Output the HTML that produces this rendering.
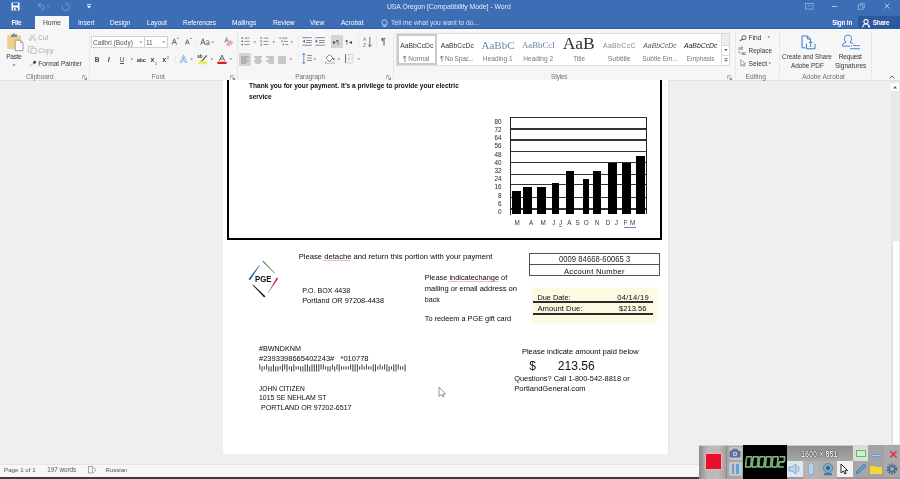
<!DOCTYPE html>
<html><head><meta charset="utf-8">
<style>
*{margin:0;padding:0;box-sizing:border-box}
html,body{width:900px;height:479px;overflow:hidden;background:#efefef;font-family:"Liberation Sans",sans-serif;position:relative}
.a{position:absolute;display:block}
.t{position:absolute;white-space:pre;line-height:10px;height:10px}
.d{}
</style></head><body><div id="root" style="position:absolute;left:0;top:0;width:900px;height:479px;overflow:hidden;filter:blur(0.3px)">

<div class="a" style="left:0px;top:0px;width:900px;height:29px;background:#3c6db5;"></div>
<div class="a" style="left:0px;top:29px;width:900px;height:51px;background:#f6f6f6;"></div>
<div class="a" style="left:0px;top:28px;width:900px;height:1px;background:#2d5c9f;"></div>
<div class="a" style="left:0px;top:29px;width:900px;height:1px;background:#fbfbfb;"></div>
<div class="a" style="left:0px;top:80px;width:900px;height:1px;background:#e0e0e0;"></div>
<div class="a" style="left:0px;top:81px;width:900px;height:383px;background:#efefef;"></div>
<div class="a" style="left:223px;top:80px;width:445px;height:374px;background:#ffffff;box-shadow:0.5px 0 1px #e2e2e2"></div>
<div class="a" style="left:0px;top:464px;width:900px;height:13px;background:#f6f6f6;"></div>
<div class="a" style="left:0px;top:464px;width:900px;height:1px;background:#e4e4e4;"></div>
<div class="a" style="left:0px;top:477px;width:900px;height:2px;background:#3a3a3a;"></div>
<div class="a" style="left:891px;top:81px;width:9px;height:383px;background:#e9e9e9;"></div>
<div class="a" style="left:891px;top:83px;width:8px;height:8px;background:#ffffff;"></div>
<svg class="a" style="left:891px;top:83px;" width="8" height="8" viewBox="0 0 8 8"><path d="M2 5.5 L4 3 L6 5.5Z" fill="#606060"/></svg>
<div class="a" style="left:892px;top:241px;width:7px;height:203px;background:#ffffff;border-left:1px solid #dadada"></div>
<svg class="a" style="left:11px;top:2px;" width="9" height="9" viewBox="0 0 9 9"><rect x="0.5" y="0.5" width="8" height="8" rx="0.5" fill="#fff"/><rect x="2" y="1" width="5" height="2.5" fill="#3c6db5"/><rect x="2" y="5.5" width="5" height="3" fill="#3c6db5"/><rect x="3" y="6" width="1.5" height="2.5" fill="#fff"/></svg>
<svg class="a" style="left:36px;top:2px;" width="16" height="9" viewBox="0 0 16 9"><path d="M2 3 L5 1 M2 3 L5 5.5 M2 3 H5.5 Q8 3 8 5.5 Q8 8 5.5 8" stroke="#6d94cb" stroke-width="1.2" fill="none"/><path d="M11 4.5 H14" stroke="#6d94cb" stroke-width="1"/></svg>
<svg class="a" style="left:61px;top:2px;" width="10" height="9" viewBox="0 0 10 9"><path d="M5 1.2 A3.6 3.6 0 1 1 1.6 3.2" stroke="#6690c9" stroke-width="1.3" fill="none"/><path d="M4 0 L6 1.5 L4 3" stroke="#6690c9" stroke-width="1" fill="none"/></svg>
<svg class="a" style="left:86px;top:3px;" width="6" height="7" viewBox="0 0 6 7"><rect x="1" y="1" width="4" height="0.8" fill="#fff"/><path d="M1 3 L5 3 L3 5.5Z" fill="#fff"/></svg>
<div class="t " style="left:386.9px;top:2.10px;font-size:6.8px;color:#e6edf7;font-weight:normal;">USA Oregon [Compatibility Mode] - Word</div>
<svg class="a" style="left:805px;top:2.5px;" width="9" height="7" viewBox="0 0 9 7"><rect x="0.5" y="0.5" width="7.6" height="5.6" fill="none" stroke="#95b3de" stroke-width="0.8"/><path d="M2.6 3.6 L4.3 2.2 L6 3.6" stroke="#95b3de" fill="none" stroke-width="0.8"/></svg>
<div class="a" style="left:832px;top:6px;width:5px;height:0.9px;background:#aec5e6;"></div>
<svg class="a" style="left:858px;top:2.5px;" width="7" height="7" viewBox="0 0 7 7"><rect x="0.5" y="2" width="4.3" height="4.3" fill="none" stroke="#95b3de" stroke-width="0.8"/><path d="M2 2 V0.5 H6.3 V4.8 H4.8" fill="none" stroke="#95b3de" stroke-width="0.8"/></svg>
<svg class="a" style="left:884px;top:2.5px;" width="6" height="6" viewBox="0 0 6 6"><path d="M0.5 0.5 L5.5 5.5 M5.5 0.5 L0.5 5.5" stroke="#b9cdea" stroke-width="0.9"/></svg>
<div class="a" style="left:35px;top:15.5px;width:34px;height:14px;background:#f7f7f7;"></div>
<div class="t " style="left:11.5px;top:17.80px;font-size:6.3px;color:#ffffff;font-weight:bold;letter-spacing:-0.25px;">File</div>
<div class="t " style="left:78px;top:17.80px;font-size:6.6px;color:#ffffff;font-weight:normal;">Insert</div>
<div class="t " style="left:110px;top:17.80px;font-size:6.55px;color:#ffffff;font-weight:normal;">Design</div>
<div class="t " style="left:147px;top:17.80px;font-size:6.6px;color:#ffffff;font-weight:normal;">Layout</div>
<div class="t " style="left:183px;top:17.80px;font-size:6.45px;color:#ffffff;font-weight:normal;">References</div>
<div class="t " style="left:232px;top:17.80px;font-size:6.6px;color:#ffffff;font-weight:normal;">Mailings</div>
<div class="t " style="left:273px;top:17.80px;font-size:6.6px;color:#ffffff;font-weight:normal;">Review</div>
<div class="t " style="left:310px;top:17.80px;font-size:6.6px;color:#ffffff;font-weight:normal;">View</div>
<div class="t " style="left:341px;top:17.80px;font-size:6.55px;color:#ffffff;font-weight:normal;">Acrobat</div>
<div class="t " style="left:43px;top:17.80px;font-size:6.75px;color:#444444;font-weight:normal;">Home</div>
<svg class="a" style="left:381px;top:18.5px;" width="7" height="9" viewBox="0 0 7 9"><path d="M3.5 0.8 A2.6 2.6 0 0 1 5.5 5 L5 6.2 H2 L1.5 5 A2.6 2.6 0 0 1 3.5 0.8Z" fill="none" stroke="#d3def0" stroke-width="0.9"/><path d="M2.2 7.3 H4.8" stroke="#d3def0" stroke-width="0.9"/></svg>
<div class="t " style="left:391.1px;top:17.70px;font-size:6.68px;color:#d7e1f1;font-weight:normal;">Tell me what you want to do...</div>
<div class="t " style="left:832.2px;top:17.70px;font-size:6.4px;color:#ffffff;font-weight:bold;letter-spacing:-0.2px;">Sign in</div>
<div class="a" style="left:858px;top:16px;width:42px;height:13px;background:#2c5a9c;"></div>
<svg class="a" style="left:862px;top:18.5px;" width="10" height="9" viewBox="0 0 10 9"><circle cx="4" cy="2.6" r="2.1" fill="none" stroke="#fff" stroke-width="1.1"/><path d="M0.6 8.5 Q1 5 4 5 Q7 5 7.4 8.5" fill="none" stroke="#fff" stroke-width="1.1"/><path d="M7 6.5 V8.5 M6 7.5 H8" stroke="#fff" stroke-width="0.8"/></svg>
<div class="t " style="left:872.8px;top:17.70px;font-size:6.4px;color:#ffffff;font-weight:bold;letter-spacing:-0.25px;">Share</div>
<div class="a" style="left:88.5px;top:32px;width:1px;height:47px;background:#e8e8e8;"></div>
<div class="a" style="left:236.5px;top:32px;width:1px;height:47px;background:#e8e8e8;"></div>
<div class="a" style="left:392.5px;top:32px;width:1px;height:47px;background:#e8e8e8;"></div>
<div class="a" style="left:735px;top:32px;width:1px;height:47px;background:#e8e8e8;"></div>
<div class="a" style="left:778.5px;top:32px;width:1px;height:47px;background:#e8e8e8;"></div>
<div class="a" style="left:871px;top:32px;width:1px;height:47px;background:#e8e8e8;"></div>
<svg class="a" style="left:6px;top:33px;" width="18" height="19" viewBox="0 0 18 19"><rect x="1.3" y="2.5" width="13.6" height="13.5" rx="1" fill="#f1cf85"/><path d="M5 1.5 H11 V4 H5Z" fill="#8a8a8a"/><path d="M7 0.5 H9 V2 H7Z" fill="#8a8a8a"/><path d="M9.2 7.2 H14.5 L17 9.7 V17.6 H9.2Z" fill="#fff" stroke="#8c8c8c" stroke-width="0.8"/><path d="M14.5 7.2 V9.7 H17" fill="none" stroke="#8c8c8c" stroke-width="0.7"/></svg>
<div class="t " style="left:6.2px;top:52.00px;font-size:6.5px;color:#363636;font-weight:normal;letter-spacing:-0.25px;">Paste</div>
<svg class="a" style="left:12px;top:63.5px;" width="4" height="3" viewBox="0 0 4 3"><path d="M0.5 0.5 L3.5 0.5 L2 2.2Z" fill="#666"/></svg>
<svg class="a" style="left:28px;top:34px;" width="9" height="7" viewBox="0 0 9 7"><path d="M2 0.5 L6 4.2 M7 0.5 L3 4.2" stroke="#b9b9b9" stroke-width="0.8"/><circle cx="2.2" cy="5.3" r="1.2" fill="none" stroke="#b9b9b9" stroke-width="0.8"/><circle cx="6.8" cy="5.3" r="1.2" fill="none" stroke="#b9b9b9" stroke-width="0.8"/></svg>
<div class="t " style="left:38.3px;top:32.80px;font-size:6.43px;color:#a8a8a8;font-weight:normal;">Cut</div>
<svg class="a" style="left:28px;top:46px;" width="9" height="8" viewBox="0 0 9 8"><rect x="0.5" y="0.5" width="5" height="5.5" fill="none" stroke="#bdbdbd" stroke-width="0.8"/><rect x="3" y="2.2" width="5.2" height="5.3" fill="#f4f4f4" stroke="#bdbdbd" stroke-width="0.8"/></svg>
<div class="t " style="left:38.3px;top:45.80px;font-size:6.5px;color:#a8a8a8;font-weight:normal;">Copy</div>
<svg class="a" style="left:28px;top:59.5px;" width="9" height="7" viewBox="0 0 9 7"><path d="M0.6 6.2 L4.6 2.6 L6 4 L2 7Z" fill="#ead495"/><path d="M4.8 2.2 L6.8 0.5 L8.4 2 L6.4 4.2Z" fill="#3c3c3c"/></svg>
<div class="t " style="left:38.3px;top:58.80px;font-size:6.58px;color:#363636;font-weight:normal;">Format Painter</div>
<div class="t " style="left:25.9px;top:71.70px;font-size:6.5px;color:#707070;font-weight:normal;">Clipboard</div>
<svg class="a" style="left:82px;top:74.5px;" width="5" height="5" viewBox="0 0 5 5"><path d="M0.5 4 V0.5 H4" fill="none" stroke="#9a9a9a" stroke-width="0.7"/><path d="M1.6 1.6 L4.3 4.3 M4.5 2.6 V4.5 H2.6" fill="none" stroke="#7a7a7a" stroke-width="0.8"/></svg>
<div class="a" style="left:91.3px;top:35.5px;width:53.4px;height:12.8px;background:#ffffff;border:1px solid #d2d2d2"></div>
<div class="a" style="left:144.2px;top:35.5px;width:23.5px;height:12.8px;background:#ffffff;border:1px solid #d2d2d2"></div>
<div class="t " style="left:93px;top:38.00px;font-size:6.6px;color:#555;font-weight:normal;">Calibri (Body)</div>
<div class="t " style="left:146px;top:38.00px;font-size:6.6px;color:#555;font-weight:normal;letter-spacing:-0.3px;">11</div>
<svg class="a" style="left:138.7px;top:41px;" width="4" height="3" viewBox="0 0 4 3"><path d="M0.5 0.6 L3 0.6 L1.75 1.9Z" fill="#666"/></svg>
<svg class="a" style="left:162.3px;top:41px;" width="4" height="3" viewBox="0 0 4 3"><path d="M0.5 0.6 L3 0.6 L1.75 1.9Z" fill="#666"/></svg>
<svg class="a" style="left:171px;top:37px;" width="9" height="9" viewBox="0 0 9 9"><path d="M1 7.5 L3.3 1.8 L5.6 7.5 M1.9 5.6 H4.7" fill="none" stroke="#555" stroke-width="0.85"/><path d="M5.8 1.6 L7.1 0.6 L8.4 1.6Z" fill="#555"/></svg>
<svg class="a" style="left:183.5px;top:37px;" width="9" height="9" viewBox="0 0 9 9"><path d="M1.3 7.5 L3.3 2.6 L5.3 7.5 M2 5.9 H4.6" fill="none" stroke="#555" stroke-width="0.8"/><path d="M5.6 1 L8 1 L6.8 2.1Z" fill="#555"/></svg>
<svg class="a" style="left:199.5px;top:37.5px;" width="11" height="8" viewBox="0 0 11 8"><path d="M0.6 6.8 L2.9 0.8 L5.2 6.8 M1.4 4.8 H4.4" fill="none" stroke="#555" stroke-width="0.85"/><path d="M9.2 3.5 Q9 2.6 7.6 2.6 Q6.2 2.6 6.2 3.4 M9 3.8 V6.8 M9 5 Q6 4.6 6 5.9 Q6.1 6.9 7.5 6.8 Q8.6 6.7 9 6" fill="none" stroke="#555" stroke-width="0.75"/></svg>
<svg class="a" style="left:210.5px;top:41px;" width="4" height="3" viewBox="0 0 4 3"><path d="M0.5 0.6 L3 0.6 L1.75 1.9Z" fill="#666"/></svg>
<svg class="a" style="left:223.5px;top:36.5px;" width="10" height="10" viewBox="0 0 10 10"><path d="M0.8 5.5 L2.6 0.6 L4.4 5.5 M1.4 3.9 H3.8" fill="none" stroke="#6d6d6d" stroke-width="0.75"/><path d="M2.2 7 L6.2 3 L9.3 5.6 L5.6 9.3 Z" fill="#f0a3b8"/><path d="M2.2 7 L4 8.8" stroke="#e07d98" stroke-width="0.6"/></svg>
<div class="a" style="left:195.5px;top:38px;width:1px;height:10px;background:#ebebeb;"></div>
<div class="t " style="left:94.7px;top:55.00px;font-size:6.4px;color:#444;font-weight:bold;">B</div>
<div class="t " style="left:107.8px;top:55.00px;font-size:7px;color:#444;font-weight:bold;font-style:italic;font-family:"Liberation Serif",serif;">I</div>
<div class="t " style="left:119.7px;top:54.50px;font-size:6.6px;color:#444;font-weight:normal;">U</div>
<div class="a" style="left:119.7px;top:63px;width:4.8px;height:0.8px;background:#555;"></div>
<svg class="a" style="left:130.2px;top:58px;" width="4" height="3" viewBox="0 0 4 3"><path d="M0.5 0.6 L3 0.6 L1.75 1.9Z" fill="#666"/></svg>
<div class="t " style="left:136.7px;top:55.00px;font-size:5.6px;color:#444;font-weight:bold;letter-spacing:-0.2px;">abc</div>
<div class="t " style="left:150.5px;top:55.00px;font-size:7px;color:#444;font-weight:bold;">x</div>
<div class="t " style="left:155px;top:56.50px;font-size:6px;color:#444;font-weight:normal;">₂</div>
<div class="t " style="left:162.2px;top:55.00px;font-size:7px;color:#444;font-weight:bold;">x</div>
<div class="t " style="left:167px;top:52.50px;font-size:5.5px;color:#444;font-weight:normal;">²</div>
<div class="a" style="left:174.5px;top:54px;width:1px;height:10px;background:#ebebeb;"></div>
<svg class="a" style="left:179px;top:54px;" width="9" height="10" viewBox="0 0 9 10"><path d="M1.2 8.6 L4.5 0.9 L7.8 8.6 H6.2 L5.4 6.4 H3.6 L2.8 8.6Z M3.9 5.2 H5.1 L4.5 3.4Z" fill="#f4f8fc" stroke="#7aa3d6" stroke-width="0.75"/></svg>
<svg class="a" style="left:190.2px;top:58px;" width="4" height="3" viewBox="0 0 4 3"><path d="M0.5 0.6 L3 0.6 L1.75 1.9Z" fill="#666"/></svg>
<svg class="a" style="left:196.5px;top:53.5px;" width="11" height="11" viewBox="0 0 11 11"><text x="0.3" y="4.3" font-size="4.6" font-weight="bold" font-family="Liberation Sans" fill="#444">ab</text><path d="M5.5 6.6 L9.6 1.4" stroke="#444" stroke-width="1.1"/><path d="M3.6 7.3 L5.4 6.8" stroke="#444" stroke-width="0.8"/><rect x="1" y="7.8" width="9" height="2.4" rx="0.6" fill="#eef23a"/></svg>
<svg class="a" style="left:209.8px;top:58px;" width="4" height="3" viewBox="0 0 4 3"><path d="M0.5 0.6 L3 0.6 L1.75 1.9Z" fill="#666"/></svg>
<svg class="a" style="left:216.5px;top:53.5px;" width="10" height="11" viewBox="0 0 10 11"><path d="M2.3 7 L5 1 L7.7 7 M3.3 5 H6.7" fill="none" stroke="#555" stroke-width="0.85"/><rect x="0.4" y="7.8" width="9.2" height="2.2" fill="#d91c1c"/></svg>
<svg class="a" style="left:229.0px;top:58px;" width="4" height="3" viewBox="0 0 4 3"><path d="M0.5 0.6 L3 0.6 L1.75 1.9Z" fill="#666"/></svg>
<div class="t " style="left:151.8px;top:71.80px;font-size:6.5px;color:#707070;font-weight:normal;">Font</div>
<svg class="a" style="left:230px;top:74.5px;" width="5" height="5" viewBox="0 0 5 5"><path d="M0.5 4 V0.5 H4" fill="none" stroke="#9a9a9a" stroke-width="0.7"/><path d="M1.6 1.6 L4.3 4.3 M4.5 2.6 V4.5 H2.6" fill="none" stroke="#7a7a7a" stroke-width="0.8"/></svg>
<svg class="a" style="left:241px;top:36.6px;" width="10" height="9" viewBox="0 0 10 9"><rect x="0.5" y="0.4" width="1.4" height="1.4" fill="#555"/><rect x="3.5" y="0.7" width="5" height="0.8" fill="#777"/><rect x="0.5" y="3.6" width="1.4" height="1.4" fill="#555"/><rect x="3.5" y="3.9000000000000004" width="5" height="0.8" fill="#777"/><rect x="0.5" y="6.800000000000001" width="1.4" height="1.4" fill="#555"/><rect x="3.5" y="7.1000000000000005" width="5" height="0.8" fill="#777"/></svg>
<svg class="a" style="left:252.9px;top:40.5px;" width="4" height="3" viewBox="0 0 4 3"><path d="M0.5 0.6 L3 0.6 L1.75 1.9Z" fill="#666"/></svg>
<svg class="a" style="left:260.3px;top:36.6px;" width="10" height="9" viewBox="0 0 10 9"><rect x="0.6" y="0.09999999999999998" width="1" height="2" fill="#666"/><rect x="3.5" y="0.7" width="5" height="0.8" fill="#777"/><rect x="0.6" y="3.3000000000000003" width="1" height="2" fill="#666"/><rect x="3.5" y="3.9000000000000004" width="5" height="0.8" fill="#777"/><rect x="0.6" y="6.5" width="1" height="2" fill="#666"/><rect x="3.5" y="7.1000000000000005" width="5" height="0.8" fill="#777"/></svg>
<svg class="a" style="left:272.0px;top:40.5px;" width="4" height="3" viewBox="0 0 4 3"><path d="M0.5 0.6 L3 0.6 L1.75 1.9Z" fill="#666"/></svg>
<svg class="a" style="left:279.3px;top:36.6px;" width="10" height="9" viewBox="0 0 10 9"><rect x="0.5" y="0.4" width="1.3" height="1.3" fill="#666"/><rect x="3.0" y="0.7" width="5.5" height="0.8" fill="#777"/><rect x="2.1" y="3.6" width="1.3" height="1.3" fill="#666"/><rect x="4.6" y="3.9000000000000004" width="4.3" height="0.8" fill="#777"/><rect x="3.7" y="6.800000000000001" width="1.3" height="1.3" fill="#666"/><rect x="6.2" y="7.1000000000000005" width="3.1" height="0.8" fill="#777"/></svg>
<svg class="a" style="left:290.3px;top:40.5px;" width="4" height="3" viewBox="0 0 4 3"><path d="M0.5 0.6 L3 0.6 L1.75 1.9Z" fill="#666"/></svg>
<div class="a" style="left:298.3px;top:36px;width:1px;height:12px;background:#ebebeb;"></div>
<svg class="a" style="left:302.3px;top:37px;" width="10" height="9" viewBox="0 0 10 9"><rect x="0.3" y="0.3" width="9.5" height="0.8" fill="#777"/><rect x="4" y="3" width="5.8" height="0.8" fill="#777"/><rect x="4" y="5.2" width="5.8" height="0.8" fill="#777"/><rect x="0.3" y="7.8" width="9.5" height="0.8" fill="#777"/><path d="M0.5 4.3 L3 2.6 V6Z" fill="#3b7bd0"/></svg>
<svg class="a" style="left:314.5px;top:37px;" width="10" height="9" viewBox="0 0 10 9"><rect x="0.3" y="0.3" width="9.5" height="0.8" fill="#777"/><rect x="4" y="3" width="5.8" height="0.8" fill="#777"/><rect x="4" y="5.2" width="5.8" height="0.8" fill="#777"/><rect x="0.3" y="7.8" width="9.5" height="0.8" fill="#777"/><path d="M3 4.3 L0.5 2.6 V6Z" fill="#3b7bd0"/></svg>
<div class="a" style="left:330.9px;top:35.1px;width:11.9px;height:12.5px;background:#d4d4d4;"></div>
<div class="t " style="left:333px;top:36.80px;font-size:5.5px;color:#444;font-weight:normal;">▸¶</div>
<div class="t " style="left:345.6px;top:36.80px;font-size:5.5px;color:#444;font-weight:normal;">¶◂</div>
<div class="a" style="left:358.3px;top:36px;width:1px;height:12px;background:#ebebeb;"></div>
<svg class="a" style="left:362.8px;top:35.5px;" width="9" height="12" viewBox="0 0 9 12"><text x="0" y="5" font-size="5" font-family="Liberation Sans" fill="#5a7fae">A</text><text x="0" y="11" font-size="5" font-family="Liberation Sans" fill="#5a7fae">Z</text><path d="M6.8 1 V10.5 M5 8.5 L6.8 10.8 L8.6 8.5" fill="none" stroke="#555" stroke-width="0.8"/></svg>
<div class="a" style="left:376.2px;top:36px;width:1px;height:12px;background:#ebebeb;"></div>
<div class="t " style="left:381px;top:36.20px;font-size:9.2px;color:#555;font-weight:normal;">¶</div>
<div class="a" style="left:239px;top:52.9px;width:12.2px;height:12.8px;background:#d4d4d4;"></div>
<svg class="a" style="left:241px;top:55.8px;" width="9" height="10" viewBox="0 0 9 10"><rect x="0" y="0.6" width="8" height="0.75" fill="#7a7a7a"/><rect x="0" y="2.6" width="5.5" height="0.75" fill="#7a7a7a"/><rect x="0" y="4.6" width="8" height="0.75" fill="#7a7a7a"/><rect x="0" y="6.6" width="5.5" height="0.75" fill="#7a7a7a"/></svg>
<svg class="a" style="left:253.8px;top:55.8px;" width="9" height="10" viewBox="0 0 9 10"><rect x="0.0" y="0.6" width="8" height="0.75" fill="#7a7a7a"/><rect x="1.25" y="2.6" width="5.5" height="0.75" fill="#7a7a7a"/><rect x="0.0" y="4.6" width="8" height="0.75" fill="#7a7a7a"/><rect x="1.25" y="6.6" width="5.5" height="0.75" fill="#7a7a7a"/></svg>
<svg class="a" style="left:266.2px;top:55.8px;" width="9" height="10" viewBox="0 0 9 10"><rect x="0" y="0.6" width="8" height="0.75" fill="#7a7a7a"/><rect x="2.5" y="2.6" width="5.5" height="0.75" fill="#7a7a7a"/><rect x="0" y="4.6" width="8" height="0.75" fill="#7a7a7a"/><rect x="2.5" y="6.6" width="5.5" height="0.75" fill="#7a7a7a"/></svg>
<svg class="a" style="left:278.2px;top:55.8px;" width="9" height="10" viewBox="0 0 9 10"><rect x="0" y="0.6" width="8" height="0.75" fill="#7a7a7a"/><rect x="0" y="2.6" width="8" height="0.75" fill="#7a7a7a"/><rect x="0" y="4.6" width="8" height="0.75" fill="#7a7a7a"/><rect x="0" y="6.6" width="8" height="0.75" fill="#7a7a7a"/></svg>
<svg class="a" style="left:289.0px;top:58px;" width="4" height="3" viewBox="0 0 4 3"><path d="M0.5 0.6 L3 0.6 L1.75 1.9Z" fill="#666"/></svg>
<div class="a" style="left:297.5px;top:53px;width:1px;height:12px;background:#ebebeb;"></div>
<svg class="a" style="left:301.5px;top:53px;" width="10" height="11" viewBox="0 0 10 11"><path d="M1.8 0.5 V10.5 M0.2 2 L1.8 0.3 L3.4 2 M0.2 9 L1.8 10.7 L3.4 9" fill="none" stroke="#3b7bd0" stroke-width="0.8"/><rect x="5" y="2" width="5" height="0.8" fill="#777"/><rect x="5" y="4.6" width="5" height="0.8" fill="#777"/><rect x="5" y="7.2" width="5" height="0.8" fill="#777"/></svg>
<svg class="a" style="left:312.9px;top:58px;" width="4" height="3" viewBox="0 0 4 3"><path d="M0.5 0.6 L3 0.6 L1.75 1.9Z" fill="#666"/></svg>
<div class="a" style="left:321px;top:53px;width:1px;height:12px;background:#ebebeb;"></div>
<svg class="a" style="left:325px;top:53px;" width="10" height="11" viewBox="0 0 10 11"><path d="M1 5 L4.5 1.5 L8 5 L4.5 8.5Z" fill="#fff" stroke="#666" stroke-width="0.8"/><circle cx="8.7" cy="6" r="0.9" fill="#666"/><rect x="0.3" y="9" width="9" height="1.8" fill="#fff" stroke="#999" stroke-width="0.5"/></svg>
<svg class="a" style="left:337.4px;top:58px;" width="4" height="3" viewBox="0 0 4 3"><path d="M0.5 0.6 L3 0.6 L1.75 1.9Z" fill="#666"/></svg>
<svg class="a" style="left:344.5px;top:54px;" width="9" height="10" viewBox="0 0 9 10"><rect x="0.5" y="0.5" width="7.5" height="8.5" fill="none" stroke="#aaa" stroke-width="0.6" stroke-dasharray="0.8 0.6"/><path d="M4.25 0.5 V9 M0.5 4.75 H8" stroke="#aaa" stroke-width="0.6" stroke-dasharray="0.8 0.6"/><path d="M0.5 0.5 V9" stroke="#555" stroke-width="0.8"/></svg>
<svg class="a" style="left:356.6px;top:58px;" width="4" height="3" viewBox="0 0 4 3"><path d="M0.5 0.6 L3 0.6 L1.75 1.9Z" fill="#666"/></svg>
<div class="t " style="left:295.3px;top:71.80px;font-size:6.36px;color:#707070;font-weight:normal;">Paragraph</div>
<svg class="a" style="left:386px;top:74.5px;" width="5" height="5" viewBox="0 0 5 5"><path d="M0.5 4 V0.5 H4" fill="none" stroke="#9a9a9a" stroke-width="0.7"/><path d="M1.6 1.6 L4.3 4.3 M4.5 2.6 V4.5 H2.6" fill="none" stroke="#7a7a7a" stroke-width="0.8"/></svg>
<div class="a" style="left:396px;top:33px;width:334px;height:33.2px;background:#ffffff;border:1px solid #dedede"></div>
<div class="a" style="left:396.8px;top:34px;width:40px;height:30.6px;background:transparent;border:2px solid #c9c9c9"></div>
<div class="t " style="left:400.3px;top:40.80px;font-size:6.75px;color:#333;font-weight:normal;">AaBbCcDc</div>
<div class="t " style="left:403px;top:53.80px;font-size:6.5px;color:#777;font-weight:normal;">¶ Normal</div>
<div class="t " style="left:440.8px;top:40.80px;font-size:6.75px;color:#333;font-weight:normal;">AaBbCcDc</div>
<div class="t " style="left:440.2px;top:53.80px;font-size:6.5px;color:#777;font-weight:normal;letter-spacing:-0.2px;">¶ No Spac...</div>
<div class="t" style="left:481.4px;top:39.9px;font-size:11.07px;line-height:10px;height:10px;color:#6a86aa;font-family:'Liberation Serif',serif;">AaBbC</div>
<div class="t " style="left:482.8px;top:53.80px;font-size:6.54px;color:#777;font-weight:normal;">Heading 1</div>
<div class="t" style="left:522px;top:40.2px;font-size:8.74px;line-height:10px;height:10px;color:#6a86aa;font-family:'Liberation Serif',serif;">AaBbCcI</div>
<div class="t " style="left:523.3px;top:53.80px;font-size:6.54px;color:#777;font-weight:normal;">Heading 2</div>
<div class="a" style="left:561px;top:37.2px;width:36px;height:14px;overflow:hidden"><div class="t" style="left:1.7px;top:0.4px;font-size:17.5px;line-height:10px;height:10px;color:#2e2e2e;font-family:'Liberation Serif',serif;">AaB</div></div>
<div class="t " style="left:573.3px;top:53.80px;font-size:6.37px;color:#777;font-weight:normal;">Title</div>
<div class="t " style="left:602.9px;top:40.80px;font-size:6.9px;color:#8a8a8a;font-weight:normal;letter-spacing:0.4px;">AaBbCcC</div>
<div class="t " style="left:607.8px;top:53.80px;font-size:6.87px;color:#777;font-weight:normal;">Subtitle</div>
<div class="t " style="left:643.3px;top:40.80px;font-size:6.83px;color:#555;font-weight:normal;font-style:italic;">AaBbCcDc</div>
<div class="t " style="left:642.2px;top:53.80px;font-size:6.6px;color:#777;font-weight:normal;">Subtle Em...</div>
<div class="t " style="left:684px;top:40.80px;font-size:6.83px;color:#222;font-weight:normal;font-style:italic;">AaBbCcDc</div>
<div class="t " style="left:686.7px;top:53.80px;font-size:6.31px;color:#777;font-weight:normal;">Emphasis</div>
<div class="a" style="left:721.3px;top:33px;width:8.7px;height:33.3px;background:#ffffff;border:1px solid #dadada"></div>
<div class="a" style="left:722.3px;top:34px;width:6.7px;height:11px;background:#ededed;"></div>
<div class="a" style="left:721.3px;top:45px;width:8.7px;height:1px;background:#dadada;"></div>
<div class="a" style="left:721.3px;top:55.3px;width:8.7px;height:1px;background:#dadada;"></div>
<svg class="a" style="left:723px;top:47.5px;" width="6" height="4" viewBox="0 0 6 4"><path d="M1.3 1 L4.7 1 L3 2.9Z" fill="#555"/></svg>
<svg class="a" style="left:723px;top:57.5px;" width="6" height="5" viewBox="0 0 6 5"><rect x="1.3" y="0.3" width="3.4" height="0.6" fill="#555"/><path d="M1.3 1.8 L4.7 1.8 L3 3.7Z" fill="#555"/></svg>
<div class="t " style="left:551.1px;top:71.80px;font-size:6.3px;color:#707070;font-weight:normal;letter-spacing:-0.15px;">Styles</div>
<svg class="a" style="left:727px;top:74.5px;" width="5" height="5" viewBox="0 0 5 5"><path d="M0.5 4 V0.5 H4" fill="none" stroke="#9a9a9a" stroke-width="0.7"/><path d="M1.6 1.6 L4.3 4.3 M4.5 2.6 V4.5 H2.6" fill="none" stroke="#7a7a7a" stroke-width="0.8"/></svg>
<svg class="a" style="left:738.8px;top:34.5px;" width="8" height="6" viewBox="0 0 8 6"><circle cx="5" cy="2.6" r="2" fill="none" stroke="#555" stroke-width="0.9"/><path d="M3.6 4 L0.8 6" stroke="#555" stroke-width="1.1"/></svg>
<div class="t " style="left:748.6px;top:32.80px;font-size:6.63px;color:#363636;font-weight:normal;">Find</div>
<svg class="a" style="left:767.2px;top:36px;" width="4" height="3" viewBox="0 0 4 3"><path d="M0.5 0.6 L3 0.6 L1.75 1.9Z" fill="#666"/></svg>
<svg class="a" style="left:737.5px;top:46px;" width="10" height="9" viewBox="0 0 10 9"><text x="0.2" y="4.2" font-size="4.6" font-family="Liberation Sans" fill="#666">ab</text><text x="3.4" y="8.6" font-size="4.6" font-family="Liberation Sans" fill="#555">ac</text><path d="M0.8 5 Q0.8 7.5 3 7.5" fill="none" stroke="#3b7bd0" stroke-width="0.7"/></svg>
<div class="t " style="left:748.6px;top:45.80px;font-size:6.4px;color:#363636;font-weight:normal;">Replace</div>
<svg class="a" style="left:739.9px;top:58.8px;" width="7" height="8" viewBox="0 0 7 8"><path d="M0.8 0.8 V7 L2.4 5.5 L3.6 7.6 L4.6 7.1 L3.5 5 H5.6Z" fill="#fff" stroke="#777" stroke-width="0.7"/></svg>
<div class="t " style="left:748.6px;top:58.80px;font-size:6.66px;color:#363636;font-weight:normal;">Select</div>
<svg class="a" style="left:768.0px;top:62px;" width="4" height="3" viewBox="0 0 4 3"><path d="M0.5 0.6 L3 0.6 L1.75 1.9Z" fill="#666"/></svg>
<div class="t " style="left:745.6px;top:71.80px;font-size:6.7px;color:#707070;font-weight:normal;">Editing</div>
<svg class="a" style="left:801px;top:35px;" width="15" height="15" viewBox="0 0 15 15"><path d="M1 1 H6.5 L9.5 4 V7 M1 1 V12.8 H4.5 M6.5 1 V4 H9.5" fill="none" stroke="#3b7bd0" stroke-width="1"/><path d="M5.5 8.8 V13.8 H14 V8.8 M9.7 12 V6.5 M8 8 L9.7 6.2 L11.4 8" fill="none" stroke="#3b7bd0" stroke-width="1"/></svg>
<div class="t " style="left:782.1px;top:52.00px;font-size:6.31px;color:#363636;font-weight:normal;">Create and Share</div>
<div class="t " style="left:790.9px;top:60.70px;font-size:6.38px;color:#363636;font-weight:normal;">Adobe PDF</div>
<svg class="a" style="left:841.5px;top:34px;" width="19" height="16" viewBox="0 0 19 16"><path d="M6 1 A3.6 3.6 0 0 1 9.6 4.6 Q9.6 7 8 8.2 L11 9.6 M6 1 A3.6 3.6 0 0 0 2.4 4.6 Q2.4 7 4 8.2 L0.8 10 V12.2 H8" fill="none" stroke="#3b7bd0" stroke-width="0.9"/><rect x="9" y="11.3" width="1" height="1" fill="#3b7bd0"/><rect x="11.2" y="11.3" width="6.8" height="0.8" fill="#3b7bd0"/><rect x="8" y="14.3" width="10" height="0.9" fill="#3b7bd0"/></svg>
<div class="t " style="left:838.8px;top:52.00px;font-size:6.6px;color:#363636;font-weight:normal;letter-spacing:-0.25px;">Request</div>
<div class="t " style="left:835px;top:60.70px;font-size:6.55px;color:#363636;font-weight:normal;">Signatures</div>
<div class="t " style="left:802.2px;top:71.80px;font-size:6.5px;color:#707070;font-weight:normal;">Adobe Acrobat</div>
<svg class="a" style="left:889px;top:74.5px;" width="6" height="4" viewBox="0 0 6 4"><path d="M0.6 3.3 L3 1 L5.4 3.3" fill="none" stroke="#555" stroke-width="0.9"/></svg>
<div class="t " style="left:249px;top:81.00px;font-size:6.57px;color:#111;font-weight:bold;">Thank you for your payment. It’s a privilege to provide your electric</div>
<div class="t " style="left:249px;top:91.50px;font-size:6.57px;color:#111;font-weight:bold;">service</div>
<div class="a" style="left:227px;top:80px;width:434.8px;height:160.3px;background:transparent;border:2.5px solid #000;border-top:none"></div>
<div class="a" style="left:510.5px;top:116.9px;width:136.0px;height:1.2px;background:#333;"></div>
<div class="a" style="left:510.5px;top:128.4px;width:136.0px;height:1.2px;background:#333;"></div>
<div class="a" style="left:510.5px;top:139.4px;width:136.0px;height:1.2px;background:#333;"></div>
<div class="a" style="left:510.5px;top:150.8px;width:136.0px;height:1.2px;background:#333;"></div>
<div class="a" style="left:510.5px;top:162.0px;width:136.0px;height:1.2px;background:#333;"></div>
<div class="a" style="left:510.5px;top:173.6px;width:136.0px;height:1.2px;background:#333;"></div>
<div class="a" style="left:510.5px;top:184.0px;width:136.0px;height:1.2px;background:#333;"></div>
<div class="a" style="left:510.5px;top:196.70000000000002px;width:136.0px;height:1.2px;background:#333;"></div>
<div class="a" style="left:510.5px;top:208.4px;width:136.0px;height:1.2px;background:#333;"></div>
<div class="a" style="left:510.0px;top:117px;width:1px;height:97.5px;background:#222;"></div>
<div class="a" style="left:646.0px;top:117px;width:1px;height:97px;background:#222;"></div>
<div class="a" style="left:512px;top:191.3px;width:8.7px;height:22.3px;background:#000;"></div>
<div class="a" style="left:523.2px;top:187.3px;width:8.8px;height:26.3px;background:#000;"></div>
<div class="a" style="left:537.3px;top:187.3px;width:8.4px;height:26.3px;background:#000;"></div>
<div class="a" style="left:552.3px;top:183.1px;width:7.2px;height:30.5px;background:#000;"></div>
<div class="a" style="left:566.3px;top:171.4px;width:7.5px;height:42.2px;background:#000;"></div>
<div class="a" style="left:582.6px;top:178.9px;width:6.7px;height:34.7px;background:#000;"></div>
<div class="a" style="left:593px;top:171.4px;width:8.4px;height:42.2px;background:#000;"></div>
<div class="a" style="left:608.4px;top:162.6px;width:8.5px;height:51.0px;background:#000;"></div>
<div class="a" style="left:621.9px;top:162.6px;width:9.0px;height:51.0px;background:#000;"></div>
<div class="a" style="left:635.9px;top:155.6px;width:8.8px;height:58.0px;background:#000;"></div>
<div class="t" style="left:480px;width:21.5px;text-align:right;top:116.60px;font-size:6.3px;color:#222">80</div>
<div class="t" style="left:480px;width:21.5px;text-align:right;top:124.83px;font-size:6.3px;color:#222">72</div>
<div class="t" style="left:480px;width:21.5px;text-align:right;top:133.06px;font-size:6.3px;color:#222">64</div>
<div class="t" style="left:480px;width:21.5px;text-align:right;top:141.29px;font-size:6.3px;color:#222">56</div>
<div class="t" style="left:480px;width:21.5px;text-align:right;top:149.52px;font-size:6.3px;color:#222">48</div>
<div class="t" style="left:480px;width:21.5px;text-align:right;top:157.75px;font-size:6.3px;color:#222">40</div>
<div class="t" style="left:480px;width:21.5px;text-align:right;top:165.98px;font-size:6.3px;color:#222">32</div>
<div class="t" style="left:480px;width:21.5px;text-align:right;top:174.21px;font-size:6.3px;color:#222">24</div>
<div class="t" style="left:480px;width:21.5px;text-align:right;top:182.44px;font-size:6.3px;color:#222">16</div>
<div class="t" style="left:480px;width:21.5px;text-align:right;top:190.67px;font-size:6.3px;color:#222">8</div>
<div class="t" style="left:480px;width:21.5px;text-align:right;top:198.90px;font-size:6.3px;color:#222">6</div>
<div class="t" style="left:480px;width:21.5px;text-align:right;top:207.13px;font-size:6.3px;color:#222">0</div>
<div class="t" style="left:512.2px;width:10px;text-align:center;top:217.8px;font-size:6.3px;color:#333">M</div>
<div class="t" style="left:526.2px;width:10px;text-align:center;top:217.8px;font-size:6.3px;color:#333">A</div>
<div class="t" style="left:538px;width:10px;text-align:center;top:217.8px;font-size:6.3px;color:#333">M</div>
<div class="t" style="left:548.8px;width:10px;text-align:center;top:217.8px;font-size:6.3px;color:#333">J</div>
<div class="t" style="left:555.7px;width:10px;text-align:center;top:217.8px;font-size:6.3px;color:#333">J</div>
<div class="t" style="left:564.3px;width:10px;text-align:center;top:217.8px;font-size:6.3px;color:#333">A</div>
<div class="t" style="left:572.5px;width:10px;text-align:center;top:217.8px;font-size:6.3px;color:#333">S</div>
<div class="t" style="left:581.3px;width:10px;text-align:center;top:217.8px;font-size:6.3px;color:#333">O</div>
<div class="t" style="left:592px;width:10px;text-align:center;top:217.8px;font-size:6.3px;color:#333">N</div>
<div class="t" style="left:603px;width:10px;text-align:center;top:217.8px;font-size:6.3px;color:#333">D</div>
<div class="t" style="left:611.4px;width:10px;text-align:center;top:217.8px;font-size:6.3px;color:#333">J</div>
<div class="t" style="left:620.7px;width:10px;text-align:center;top:217.8px;font-size:6.3px;color:#333">F</div>
<div class="t" style="left:627.7px;width:10px;text-align:center;top:217.8px;font-size:6.3px;color:#333">M</div>
<div class="a" style="left:558.8px;top:226px;width:3.5px;height:0.8px;background:#e07070;"></div>
<div class="a" style="left:624px;top:226.5px;width:12.4px;height:0.8px;background:#7a7ad0;"></div>
<div class="t d" style="left:298.7px;top:251.70px;font-size:7.67px;color:#0a0a0a;font-weight:normal;">Please detache and return this portion with your payment</div>
<div class="a" style="left:322.7px;top:259.8px;width:27px;height:0.9px;background:#f0a0a0;opacity:0.7"></div>
<svg class="a" style="left:246px;top:258px;" width="36" height="42" viewBox="0 0 36 42">
<path d="M2.4 21.2 L13.3 7.1 L13.6 7.4 L4.2 22 Z" fill="#2a5aa8"/>
<path d="M16.4 3.6 L17.3 2.7 L28.9 15.1 L28.6 15.4 Z" fill="#2e8a5e"/>
<path d="M30.8 19.6 L32.2 20.6 L22.2 35.1 L21.9 34.9 Z" fill="#c8285a"/>
<path d="M6.8 26.4 L6.4 26.9 L18.2 39.4 L19.4 38.3 Z" fill="#111"/>
</svg>
<div class="t" style="left:255.3px;top:273.6px;font-size:9.7px;line-height:10px;color:#111;font-weight:bold;transform:scaleX(0.8);transform-origin:0 0">PGE</div>
<div class="t d" style="left:302.2px;top:286.00px;font-size:7.1px;color:#0a0a0a;font-weight:normal;">P.O. BOX 4438</div>
<div class="t d" style="left:302.2px;top:296.20px;font-size:7.36px;color:#0a0a0a;font-weight:normal;">Portland OR 97208-4438</div>
<div class="t d" style="left:424.8px;top:272.60px;font-size:7.38px;color:#0a0a0a;font-weight:normal;">Please indicatechange of</div>
<div class="a" style="left:448px;top:281.3px;width:50.5px;height:0.9px;background:#f0a0a0;opacity:0.7"></div>
<div class="t d" style="left:424.8px;top:283.80px;font-size:7.54px;color:#0a0a0a;font-weight:normal;">mailing or email address on</div>
<div class="t d" style="left:424.8px;top:295.00px;font-size:7.15px;color:#0a0a0a;font-weight:normal;">back</div>
<div class="t d" style="left:424.8px;top:313.90px;font-size:7.34px;color:#0a0a0a;font-weight:normal;">To redeem a PGE gift card</div>
<div class="a" style="left:528.5px;top:253px;width:131.7px;height:22.5px;background:transparent;border:1px solid #505050"></div>
<div class="a" style="left:528.5px;top:264px;width:131.7px;height:1px;background:#505050;"></div>
<div class="t" style="left:559.4px;top:254px;font-size:9.1px;color:#222;transform:scaleX(0.84);transform-origin:0 0;letter-spacing:0.05px">0009 84668-60065 3</div>
<div class="t d" style="left:564px;top:267.00px;font-size:8.27px;color:#0a0a0a;font-weight:normal;font-size:7.6px;letter-spacing:0.3px">Account Number</div>
<div class="a" style="left:531.5px;top:287.6px;width:125.2px;height:35.5px;background:#fcfbe2;box-shadow:0 0 2px 1px #fdfdf0"></div>
<div class="t d" style="left:537.4px;top:292.50px;font-size:7.37px;color:#0a0a0a;font-weight:normal;">Due Date:</div>
<div class="t d" style="left:617.3px;top:292.50px;font-size:8.07px;color:#0a0a0a;font-weight:normal;font-size:7.6px;letter-spacing:0.25px">04/14/19</div>
<div class="a" style="left:532.8px;top:301.3px;width:120px;height:2px;background:#2b2b2b;"></div>
<div class="t d" style="left:537.4px;top:304.10px;font-size:7.71px;color:#0a0a0a;font-weight:normal;">Amount Due:</div>
<div class="t d" style="left:619px;top:304.10px;font-size:7.58px;color:#0a0a0a;font-weight:normal;">$213.56</div>
<div class="a" style="left:532.8px;top:312.9px;width:120.7px;height:2px;background:#2b2b2b;"></div>
<svg class="a" style="left:259px;top:364px;" width="148" height="8" viewBox="0 0 148 8"><rect x="0.30" y="0.30" width="0.95" height="5.30" fill="#3a3a3a"/><rect x="2.57" y="2.30" width="0.95" height="5.20" fill="#3a3a3a"/><rect x="4.84" y="2.30" width="0.95" height="3.30" fill="#3a3a3a"/><rect x="7.11" y="0.30" width="0.95" height="5.30" fill="#3a3a3a"/><rect x="9.38" y="2.30" width="0.95" height="5.20" fill="#3a3a3a"/><rect x="11.65" y="2.30" width="0.95" height="5.20" fill="#3a3a3a"/><rect x="13.92" y="0.30" width="0.95" height="7.20" fill="#3a3a3a"/><rect x="16.19" y="2.30" width="0.95" height="5.20" fill="#3a3a3a"/><rect x="18.46" y="2.30" width="0.95" height="5.20" fill="#3a3a3a"/><rect x="20.73" y="2.30" width="0.95" height="3.30" fill="#3a3a3a"/><rect x="23.00" y="0.30" width="0.95" height="7.20" fill="#3a3a3a"/><rect x="25.27" y="0.30" width="0.95" height="5.30" fill="#3a3a3a"/><rect x="27.54" y="0.30" width="0.95" height="7.20" fill="#3a3a3a"/><rect x="29.81" y="2.30" width="0.95" height="3.30" fill="#3a3a3a"/><rect x="32.08" y="2.30" width="0.95" height="5.20" fill="#3a3a3a"/><rect x="34.35" y="0.30" width="0.95" height="7.20" fill="#3a3a3a"/><rect x="36.62" y="2.30" width="0.95" height="3.30" fill="#3a3a3a"/><rect x="38.89" y="2.30" width="0.95" height="3.30" fill="#3a3a3a"/><rect x="41.16" y="2.30" width="0.95" height="5.20" fill="#3a3a3a"/><rect x="43.43" y="2.30" width="0.95" height="5.20" fill="#3a3a3a"/><rect x="45.70" y="0.30" width="0.95" height="7.20" fill="#3a3a3a"/><rect x="47.97" y="0.30" width="0.95" height="7.20" fill="#3a3a3a"/><rect x="50.24" y="2.30" width="0.95" height="5.20" fill="#3a3a3a"/><rect x="52.51" y="0.30" width="0.95" height="7.20" fill="#3a3a3a"/><rect x="54.78" y="0.30" width="0.95" height="7.20" fill="#3a3a3a"/><rect x="57.05" y="0.30" width="0.95" height="7.20" fill="#3a3a3a"/><rect x="59.32" y="0.30" width="0.95" height="7.20" fill="#3a3a3a"/><rect x="61.59" y="0.30" width="0.95" height="5.30" fill="#3a3a3a"/><rect x="63.86" y="0.30" width="0.95" height="5.30" fill="#3a3a3a"/><rect x="66.13" y="2.30" width="0.95" height="3.30" fill="#3a3a3a"/><rect x="68.40" y="2.30" width="0.95" height="5.20" fill="#3a3a3a"/><rect x="70.67" y="2.30" width="0.95" height="5.20" fill="#3a3a3a"/><rect x="72.94" y="0.30" width="0.95" height="5.30" fill="#3a3a3a"/><rect x="75.21" y="2.30" width="0.95" height="5.20" fill="#3a3a3a"/><rect x="77.48" y="0.30" width="0.95" height="5.30" fill="#3a3a3a"/><rect x="79.75" y="0.30" width="0.95" height="7.20" fill="#3a3a3a"/><rect x="82.02" y="2.30" width="0.95" height="3.30" fill="#3a3a3a"/><rect x="84.29" y="2.30" width="0.95" height="3.30" fill="#3a3a3a"/><rect x="86.56" y="2.30" width="0.95" height="3.30" fill="#3a3a3a"/><rect x="88.83" y="2.30" width="0.95" height="3.30" fill="#3a3a3a"/><rect x="91.10" y="0.30" width="0.95" height="5.30" fill="#3a3a3a"/><rect x="93.37" y="0.30" width="0.95" height="7.20" fill="#3a3a3a"/><rect x="95.64" y="0.30" width="0.95" height="7.20" fill="#3a3a3a"/><rect x="97.91" y="0.30" width="0.95" height="7.20" fill="#3a3a3a"/><rect x="100.18" y="2.30" width="0.95" height="3.30" fill="#3a3a3a"/><rect x="102.45" y="0.30" width="0.95" height="5.30" fill="#3a3a3a"/><rect x="104.72" y="2.30" width="0.95" height="3.30" fill="#3a3a3a"/><rect x="106.99" y="0.30" width="0.95" height="5.30" fill="#3a3a3a"/><rect x="109.26" y="2.30" width="0.95" height="3.30" fill="#3a3a3a"/><rect x="111.53" y="2.30" width="0.95" height="3.30" fill="#3a3a3a"/><rect x="113.80" y="0.30" width="0.95" height="7.20" fill="#3a3a3a"/><rect x="116.07" y="0.30" width="0.95" height="7.20" fill="#3a3a3a"/><rect x="118.34" y="2.30" width="0.95" height="3.30" fill="#3a3a3a"/><rect x="120.61" y="0.30" width="0.95" height="5.30" fill="#3a3a3a"/><rect x="122.88" y="2.30" width="0.95" height="3.30" fill="#3a3a3a"/><rect x="125.15" y="0.30" width="0.95" height="5.30" fill="#3a3a3a"/><rect x="127.42" y="0.30" width="0.95" height="7.20" fill="#3a3a3a"/><rect x="129.69" y="2.30" width="0.95" height="5.20" fill="#3a3a3a"/><rect x="131.96" y="2.30" width="0.95" height="3.30" fill="#3a3a3a"/><rect x="134.23" y="0.30" width="0.95" height="7.20" fill="#3a3a3a"/><rect x="136.50" y="0.30" width="0.95" height="7.20" fill="#3a3a3a"/><rect x="138.77" y="0.30" width="0.95" height="5.30" fill="#3a3a3a"/><rect x="141.04" y="2.30" width="0.95" height="3.30" fill="#3a3a3a"/><rect x="143.31" y="2.30" width="0.95" height="3.30" fill="#3a3a3a"/><rect x="145.58" y="0.30" width="0.95" height="7.20" fill="#3a3a3a"/></svg>
<div class="t d" style="left:259px;top:343.50px;font-size:7.2px;color:#0a0a0a;font-weight:normal;">#BWNDKNM</div>
<div class="t d" style="left:259px;top:353.70px;font-size:7.52px;color:#0a0a0a;font-weight:normal;">#2393398665402243#   *010778</div>
<div class="t d" style="left:259px;top:384.00px;font-size:6.65px;color:#0a0a0a;font-weight:normal;">JOHN CITIZEN</div>
<div class="t d" style="left:259px;top:393.40px;font-size:6.86px;color:#0a0a0a;font-weight:normal;">1015 SE NEHLAM ST</div>
<div class="t d" style="left:259px;top:403.40px;font-size:7.07px;color:#0a0a0a;font-weight:normal;"> PORTLAND OR 97202-6517</div>
<div class="t d" style="left:521.9px;top:347.30px;font-size:7.57px;color:#0a0a0a;font-weight:normal;">Please indicate amount paid below</div>
<div class="t" style="left:529.3px;top:360.5px;font-size:12px;color:#111">$</div>
<div class="t" style="left:557.8px;top:360.5px;font-size:12.1px;color:#111">213.56</div>
<div class="t d" style="left:514.2px;top:373.60px;font-size:7.4px;color:#0a0a0a;font-weight:normal;">Questions? Call 1-800-542-8818 or</div>
<div class="t d" style="left:514.2px;top:383.70px;font-size:7.57px;color:#0a0a0a;font-weight:normal;">PortlandGeneral.com</div>
<svg class="a" style="left:438px;top:386px;" width="10" height="12" viewBox="0 0 10 12"><path d="M1 1 V10.5 L3.2 8.5 L4.8 11 L6 10.3 L4.6 8 H7.6Z" fill="#fff" stroke="#888" stroke-width="0.9"/></svg>
<div class="t " style="left:4px;top:465.00px;font-size:6.2px;color:#555;font-weight:normal;">Page 1 of 1</div>
<div class="t " style="left:47.3px;top:465.00px;font-size:6.28px;color:#555;font-weight:normal;">197 words</div>
<svg class="a" style="left:88px;top:465.5px;" width="9" height="8" viewBox="0 0 9 8"><rect x="0.5" y="0.5" width="4" height="6.5" fill="none" stroke="#888" stroke-width="0.7"/><path d="M5.5 1 L8 4 L5.5 7" fill="none" stroke="#888" stroke-width="0.7"/></svg>
<div class="t " style="left:105.5px;top:465.00px;font-size:6.09px;color:#555;font-weight:normal;">Russian</div>
<div class="a" style="left:699px;top:445px;width:201px;height:34px;background:#9a9a9a;"></div>
<div class="a" style="left:699px;top:445px;width:28px;height:34px;background:#b2b2b2;background:linear-gradient(90deg,#8a8a8a,#b9b9b9 30%,#bcbcbc 70%,#a0a0a0);border-right:1px solid #8d8d8d;border-top:1px solid #d0d0d0"></div>
<div class="a" style="left:705.5px;top:454px;width:15.2px;height:14.6px;background:#e8102a;box-shadow:0 0 1.5px 1px #f6b0b8"></div>
<div class="a" style="left:727px;top:445px;width:16px;height:16px;background:#a6a6a6;border-top:1px solid #d0d0d0"></div>
<div class="a" style="left:728.5px;top:447px;width:13px;height:13px;background:#c4c4c4;border-radius:2px"></div>
<svg class="a" style="left:729px;top:448px;" width="12" height="10" viewBox="0 0 12 10"><rect x="0.5" y="2.5" width="11" height="7" rx="1.5" fill="#5e6b96"/><rect x="3.5" y="0.8" width="5" height="2.5" rx="0.8" fill="#5e6b96"/><circle cx="6" cy="6" r="2.3" fill="#c9d4ee"/><circle cx="6" cy="6" r="1.3" fill="#6f7fb0"/></svg>
<div class="a" style="left:727px;top:461px;width:16px;height:18px;background:#a6a6a6;"></div>
<div class="a" style="left:728.5px;top:462px;width:13px;height:14px;background:#c8c8c8;border-radius:2px"></div>
<div class="a" style="left:731.5px;top:464px;width:2.8px;height:9.5px;background:#5ea4d6;"></div>
<div class="a" style="left:736px;top:464px;width:2.8px;height:9.5px;background:#5ea4d6;"></div>
<div class="a" style="left:743px;top:445px;width:44px;height:34px;background:#000;"></div>
<svg class="a" style="left:745px;top:456px;transform:skewX(-6deg);" width="42" height="12" viewBox="0 0 42 12"><path d="M1.60 0.80 L5.60 0.80" stroke="#9ee098" stroke-width="1.6" stroke-linecap="round"/><path d="M1.60 0.80 L5.60 0.80" stroke="#2a4a2a" stroke-width="0.4" stroke-linecap="round"/><path d="M6.20 1.40 L6.20 5.30" stroke="#9ee098" stroke-width="1.6" stroke-linecap="round"/><path d="M6.20 1.40 L6.20 5.30" stroke="#2a4a2a" stroke-width="0.4" stroke-linecap="round"/><path d="M6.20 6.50 L6.20 10.40" stroke="#9ee098" stroke-width="1.6" stroke-linecap="round"/><path d="M6.20 6.50 L6.20 10.40" stroke="#2a4a2a" stroke-width="0.4" stroke-linecap="round"/><path d="M1.60 11.00 L5.60 11.00" stroke="#9ee098" stroke-width="1.6" stroke-linecap="round"/><path d="M1.60 11.00 L5.60 11.00" stroke="#2a4a2a" stroke-width="0.4" stroke-linecap="round"/><path d="M1.00 6.50 L1.00 10.40" stroke="#9ee098" stroke-width="1.6" stroke-linecap="round"/><path d="M1.00 6.50 L1.00 10.40" stroke="#2a4a2a" stroke-width="0.4" stroke-linecap="round"/><path d="M1.00 1.40 L1.00 5.30" stroke="#9ee098" stroke-width="1.6" stroke-linecap="round"/><path d="M1.00 1.40 L1.00 5.30" stroke="#2a4a2a" stroke-width="0.4" stroke-linecap="round"/><path d="M8.20 0.80 L12.20 0.80" stroke="#9ee098" stroke-width="1.6" stroke-linecap="round"/><path d="M8.20 0.80 L12.20 0.80" stroke="#2a4a2a" stroke-width="0.4" stroke-linecap="round"/><path d="M12.80 1.40 L12.80 5.30" stroke="#9ee098" stroke-width="1.6" stroke-linecap="round"/><path d="M12.80 1.40 L12.80 5.30" stroke="#2a4a2a" stroke-width="0.4" stroke-linecap="round"/><path d="M12.80 6.50 L12.80 10.40" stroke="#9ee098" stroke-width="1.6" stroke-linecap="round"/><path d="M12.80 6.50 L12.80 10.40" stroke="#2a4a2a" stroke-width="0.4" stroke-linecap="round"/><path d="M8.20 11.00 L12.20 11.00" stroke="#9ee098" stroke-width="1.6" stroke-linecap="round"/><path d="M8.20 11.00 L12.20 11.00" stroke="#2a4a2a" stroke-width="0.4" stroke-linecap="round"/><path d="M7.60 6.50 L7.60 10.40" stroke="#9ee098" stroke-width="1.6" stroke-linecap="round"/><path d="M7.60 6.50 L7.60 10.40" stroke="#2a4a2a" stroke-width="0.4" stroke-linecap="round"/><path d="M7.60 1.40 L7.60 5.30" stroke="#9ee098" stroke-width="1.6" stroke-linecap="round"/><path d="M7.60 1.40 L7.60 5.30" stroke="#2a4a2a" stroke-width="0.4" stroke-linecap="round"/><path d="M14.80 0.80 L18.80 0.80" stroke="#9ee098" stroke-width="1.6" stroke-linecap="round"/><path d="M14.80 0.80 L18.80 0.80" stroke="#2a4a2a" stroke-width="0.4" stroke-linecap="round"/><path d="M19.40 1.40 L19.40 5.30" stroke="#9ee098" stroke-width="1.6" stroke-linecap="round"/><path d="M19.40 1.40 L19.40 5.30" stroke="#2a4a2a" stroke-width="0.4" stroke-linecap="round"/><path d="M19.40 6.50 L19.40 10.40" stroke="#9ee098" stroke-width="1.6" stroke-linecap="round"/><path d="M19.40 6.50 L19.40 10.40" stroke="#2a4a2a" stroke-width="0.4" stroke-linecap="round"/><path d="M14.80 11.00 L18.80 11.00" stroke="#9ee098" stroke-width="1.6" stroke-linecap="round"/><path d="M14.80 11.00 L18.80 11.00" stroke="#2a4a2a" stroke-width="0.4" stroke-linecap="round"/><path d="M14.20 6.50 L14.20 10.40" stroke="#9ee098" stroke-width="1.6" stroke-linecap="round"/><path d="M14.20 6.50 L14.20 10.40" stroke="#2a4a2a" stroke-width="0.4" stroke-linecap="round"/><path d="M14.20 1.40 L14.20 5.30" stroke="#9ee098" stroke-width="1.6" stroke-linecap="round"/><path d="M14.20 1.40 L14.20 5.30" stroke="#2a4a2a" stroke-width="0.4" stroke-linecap="round"/><path d="M21.40 0.80 L25.40 0.80" stroke="#9ee098" stroke-width="1.6" stroke-linecap="round"/><path d="M21.40 0.80 L25.40 0.80" stroke="#2a4a2a" stroke-width="0.4" stroke-linecap="round"/><path d="M26.00 1.40 L26.00 5.30" stroke="#9ee098" stroke-width="1.6" stroke-linecap="round"/><path d="M26.00 1.40 L26.00 5.30" stroke="#2a4a2a" stroke-width="0.4" stroke-linecap="round"/><path d="M26.00 6.50 L26.00 10.40" stroke="#9ee098" stroke-width="1.6" stroke-linecap="round"/><path d="M26.00 6.50 L26.00 10.40" stroke="#2a4a2a" stroke-width="0.4" stroke-linecap="round"/><path d="M21.40 11.00 L25.40 11.00" stroke="#9ee098" stroke-width="1.6" stroke-linecap="round"/><path d="M21.40 11.00 L25.40 11.00" stroke="#2a4a2a" stroke-width="0.4" stroke-linecap="round"/><path d="M20.80 6.50 L20.80 10.40" stroke="#9ee098" stroke-width="1.6" stroke-linecap="round"/><path d="M20.80 6.50 L20.80 10.40" stroke="#2a4a2a" stroke-width="0.4" stroke-linecap="round"/><path d="M20.80 1.40 L20.80 5.30" stroke="#9ee098" stroke-width="1.6" stroke-linecap="round"/><path d="M20.80 1.40 L20.80 5.30" stroke="#2a4a2a" stroke-width="0.4" stroke-linecap="round"/><path d="M28.00 0.80 L32.00 0.80" stroke="#9ee098" stroke-width="1.6" stroke-linecap="round"/><path d="M28.00 0.80 L32.00 0.80" stroke="#2a4a2a" stroke-width="0.4" stroke-linecap="round"/><path d="M32.60 1.40 L32.60 5.30" stroke="#9ee098" stroke-width="1.6" stroke-linecap="round"/><path d="M32.60 1.40 L32.60 5.30" stroke="#2a4a2a" stroke-width="0.4" stroke-linecap="round"/><path d="M32.60 6.50 L32.60 10.40" stroke="#9ee098" stroke-width="1.6" stroke-linecap="round"/><path d="M32.60 6.50 L32.60 10.40" stroke="#2a4a2a" stroke-width="0.4" stroke-linecap="round"/><path d="M28.00 11.00 L32.00 11.00" stroke="#9ee098" stroke-width="1.6" stroke-linecap="round"/><path d="M28.00 11.00 L32.00 11.00" stroke="#2a4a2a" stroke-width="0.4" stroke-linecap="round"/><path d="M27.40 6.50 L27.40 10.40" stroke="#9ee098" stroke-width="1.6" stroke-linecap="round"/><path d="M27.40 6.50 L27.40 10.40" stroke="#2a4a2a" stroke-width="0.4" stroke-linecap="round"/><path d="M27.40 1.40 L27.40 5.30" stroke="#9ee098" stroke-width="1.6" stroke-linecap="round"/><path d="M27.40 1.40 L27.40 5.30" stroke="#2a4a2a" stroke-width="0.4" stroke-linecap="round"/><path d="M34.60 0.80 L38.60 0.80" stroke="#9ee098" stroke-width="1.6" stroke-linecap="round"/><path d="M34.60 0.80 L38.60 0.80" stroke="#2a4a2a" stroke-width="0.4" stroke-linecap="round"/><path d="M39.20 1.40 L39.20 5.30" stroke="#9ee098" stroke-width="1.6" stroke-linecap="round"/><path d="M39.20 1.40 L39.20 5.30" stroke="#2a4a2a" stroke-width="0.4" stroke-linecap="round"/><path d="M34.60 5.90 L38.60 5.90" stroke="#9ee098" stroke-width="1.6" stroke-linecap="round"/><path d="M34.60 5.90 L38.60 5.90" stroke="#2a4a2a" stroke-width="0.4" stroke-linecap="round"/><path d="M34.00 6.50 L34.00 10.40" stroke="#9ee098" stroke-width="1.6" stroke-linecap="round"/><path d="M34.00 6.50 L34.00 10.40" stroke="#2a4a2a" stroke-width="0.4" stroke-linecap="round"/><path d="M34.60 11.00 L38.60 11.00" stroke="#9ee098" stroke-width="1.6" stroke-linecap="round"/><path d="M34.60 11.00 L38.60 11.00" stroke="#2a4a2a" stroke-width="0.4" stroke-linecap="round"/></svg>
<div class="a" style="left:787px;top:445px;width:66px;height:16.5px;background:#959595;background:linear-gradient(#8e8e8e,#a9a9a9);border-top:1px solid #c9c9c9"></div>
<div class="t" style="left:801.3px;top:449.4px;font-size:9.2px;line-height:10px;color:#f4f4f4;font-weight:bold;transform:scaleX(0.79);transform-origin:0 0;text-shadow:0 0 1.4px #111,0 0 0.7px #222,0 0 0.4px #222;">1600 × 851</div>
<div class="a" style="left:787px;top:461px;width:16px;height:16px;background:#dfe7ee;"></div>
<div class="a" style="left:803px;top:461px;width:16px;height:18px;background:#b4b4b4;"></div>
<div class="a" style="left:819px;top:461px;width:18px;height:18px;background:#b0b0b0;"></div>
<div class="a" style="left:837px;top:461px;width:16px;height:16px;background:#f2f2f2;"></div>
<svg class="a" style="left:788px;top:463px;" width="14" height="12" viewBox="0 0 14 12"><path d="M1 4 H4 L8 1 V11 L4 8 H1Z" fill="#bcd6ea" stroke="#6f9dc0" stroke-width="0.8"/><path d="M10 3 Q12 6 10 9" fill="none" stroke="#6f9dc0" stroke-width="0.9"/></svg>
<svg class="a" style="left:805px;top:462px;" width="12" height="14" viewBox="0 0 12 14"><rect x="3.3" y="0.8" width="5.4" height="12" rx="2.7" fill="#b7d0e6" stroke="#7fa7c8" stroke-width="0.8"/></svg>
<svg class="a" style="left:821px;top:462px;" width="14" height="14" viewBox="0 0 14 14"><circle cx="7" cy="6" r="4.6" fill="#7fa9cc" stroke="#4b7aa3" stroke-width="0.8"/><circle cx="7" cy="6" r="2" fill="#2f5d86"/><rect x="3" y="11" width="8" height="2.2" fill="#4b7aa3"/></svg>
<svg class="a" style="left:839px;top:463px;" width="12" height="12" viewBox="0 0 12 12"><path d="M2 1 V10 L4.3 8 L5.8 11 L7.2 10.3 L5.8 7.6 H8.6Z" fill="#fff" stroke="#111" stroke-width="0.9"/></svg>
<div class="a" style="left:853px;top:445px;width:15px;height:16px;background:#dcdcdc;"></div>
<div class="a" style="left:868px;top:445px;width:16px;height:16px;background:#a3a3a3;"></div>
<div class="a" style="left:884px;top:445px;width:16px;height:16px;background:#a9a9a9;"></div>
<div class="a" style="left:856px;top:449.8px;width:9.8px;height:7.4px;background:#d2ecd0;border:1.3px solid #5cc35c"></div>
<div class="a" style="left:870.5px;top:453.8px;width:11px;height:2.8px;background:#a8c8e8;border-radius:1.4px;border:0.6px solid #6c9cc7"></div>
<svg class="a" style="left:888.5px;top:449.5px;" width="9" height="9" viewBox="0 0 9 9"><path d="M1.3 1.3 L7.5 7.5 M7.5 1.3 L1.3 7.5" stroke="#e0284a" stroke-width="1.4"/></svg>
<div class="a" style="left:853px;top:461px;width:15px;height:16px;background:#a6a6a6;"></div>
<div class="a" style="left:868px;top:461px;width:16px;height:16px;background:#a3a3a3;"></div>
<div class="a" style="left:884px;top:461px;width:16px;height:16px;background:#a9a9a9;"></div>
<svg class="a" style="left:854px;top:462px;" width="13" height="14" viewBox="0 0 13 14"><path d="M2 12 L3 9 L10 2 L12 4 L5 11Z" fill="#4fa3d6" stroke="#2f6c99" stroke-width="0.6"/></svg>
<svg class="a" style="left:869px;top:464px;" width="14" height="11" viewBox="0 0 14 11"><path d="M1 2 H6 L7 3 H13 V10 H1Z" fill="#f3d43a"/></svg>
<svg class="a" style="left:886px;top:463px;" width="12" height="12" viewBox="0 0 12 12"><circle cx="6" cy="6" r="4.2" fill="none" stroke="#4a6a8a" stroke-width="2.4" stroke-dasharray="1.6 1.1"/><circle cx="6" cy="6" r="2.6" fill="none" stroke="#4a6a8a" stroke-width="1.4"/></svg>
</div></body></html>
